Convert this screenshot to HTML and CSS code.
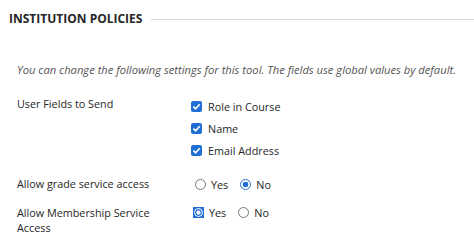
FILE: index.html
```html
<!DOCTYPE html>
<html>
<head>
<meta charset="utf-8">
<link rel="stylesheet" href="styles.css">
</head>
<body>
<section class="panel">
  <div class="heading">
    <h2 class="heading-title">INSTITUTION POLICIES</h2>
    <div class="heading-rule"></div>
  </div>
  <p class="intro">You can change the following settings for this tool. The fields use global values by default.</p>
  <div class="row row-fields">
    <div class="label">User Fields to Send</div>
    <div class="controls stack">
      <label class="opt"><span class="check"><svg viewBox="0 0 11 11" width="11" height="11"><path d="M2.4 5.6 L4.6 7.8 L8.7 3.3" fill="none" stroke="#fff" stroke-width="1.7"/></svg></span>Role in Course</label>
      <label class="opt"><span class="check"><svg viewBox="0 0 11 11" width="11" height="11"><path d="M2.4 5.6 L4.6 7.8 L8.7 3.3" fill="none" stroke="#fff" stroke-width="1.7"/></svg></span>Name</label>
      <label class="opt"><span class="check"><svg viewBox="0 0 11 11" width="11" height="11"><path d="M2.4 5.6 L4.6 7.8 L8.7 3.3" fill="none" stroke="#fff" stroke-width="1.7"/></svg></span>Email Address</label>
    </div>
  </div>
  <div class="row row-grade">
    <div class="label">Allow grade service access</div>
    <div class="controls inline">
      <label class="opt"><span class="radio"></span>Yes</label>
      <label class="opt"><span class="radio on"></span>No</label>
    </div>
  </div>
  <div class="row row-member">
    <div class="label">Allow Membership Service Access</div>
    <div class="controls inline">
      <label class="opt"><span class="focus"><span class="radio on"></span></span>Yes</label>
      <label class="opt"><span class="radio"></span>No</label>
    </div>
  </div>
</section>
</body>
</html>
```

FILE: styles.css
```css
html, body {
  margin: 0;
  padding: 0;
  background: #fff;
}
body {
  font-family: "Open Sans", "Noto Sans", sans-serif;
  color: #262626;
  font-size: 10.8px;
}
.panel {
  padding: 10px 0 0 9px;
}
.heading {
  display: flex;
  align-items: center;
  gap: 9px;
}
.heading-title {
  margin: 0;
  font-size: 12px;
  font-weight: 700;
  line-height: 18px;
  color: #262626;
  white-space: nowrap;
}
.heading-rule {
  flex: 1;
  height: 1px;
  background: #d6d6d6;
}
.intro {
  margin: 33px 0 0 8px;
  font-style: italic;
  color: #555;
  font-size: 11.2px;
  line-height: 18px;
  white-space: nowrap;
}
.row {
  display: flex;
  margin-left: 8px;
}
.label {
  box-sizing: border-box;
  width: 174px;
  padding-right: 24px;
  line-height: 16px;
}
.row-fields {
  margin-top: 16px;
}
.row-fields .label {
  padding-top: 1px;
}
.stack {
  display: flex;
  flex-direction: column;
  gap: 5px;
  padding-top: 3px;
}
.opt {
  display: flex;
  align-items: center;
  line-height: 17px;
}
.check {
  width: 11px;
  height: 11px;
  border-radius: 2px;
  background: #1f6fd6;
  margin-right: 6px;
  display: flex;
}
.row-grade {
  margin-top: 17px;
}
.inline {
  display: flex;
  align-items: flex-start;
  gap: 12px;
  padding-left: 4px;
}
.radio {
  box-sizing: border-box;
  width: 11px;
  height: 11px;
  border-radius: 50%;
  border: 1px solid #777;
  margin-right: 5px;
  display: inline-block;
  background: #fff;
}
.radio.on {
  border: 1px solid #1f6fd6;
  background: radial-gradient(circle, #1f6fd6 0 2.6px, #fff 3.1px);
}
.row-member {
  margin-top: 12px;
}
.row-member .label {
  line-height: 15px;
}
.row-member .opt {
  line-height: 15px;
}
.focus {
  display: flex;
  margin: 0 5px 0 -2px;
  padding: 1px;
  background: #1f6fd6;
}
.focus .radio {
  margin-right: 0;
  width: 9px;
  height: 9px;
  border-color: #fff;
  border-width: 1.5px;
  background: radial-gradient(circle, #fff 0 1.8px, #1f6fd6 2.4px);
}
```
